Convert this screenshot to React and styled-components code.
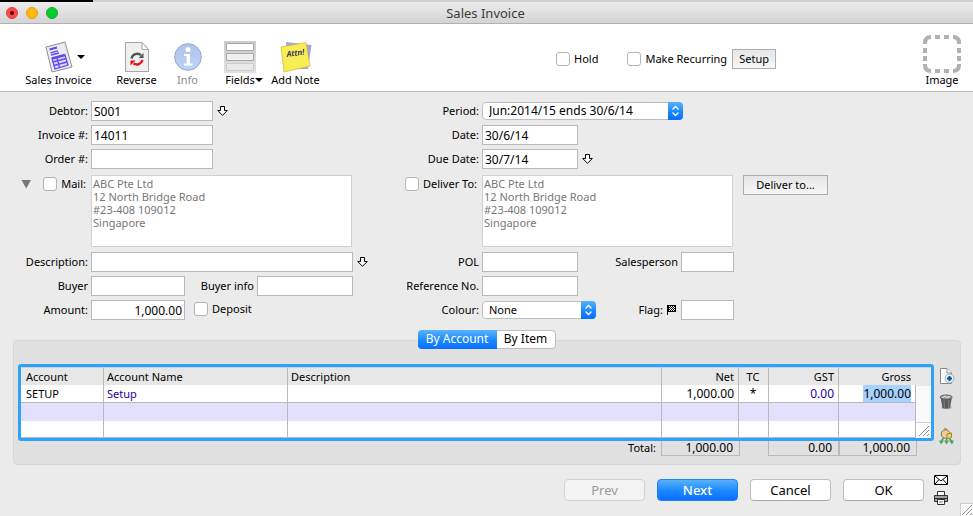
import React, { useState } from 'react';
import styled, { createGlobalStyle, css } from 'styled-components';

const colors = {
  window: '#ebebeb',
  panel: '#e1e1e1',
  line: '#b9b9b9',
  focus: '#2ea2f8',
  muted: '#777777',
  link: '#1c00a8',
};

const blueFill = 'linear-gradient(#58b2fb, #1a88ff 55%, #0a6dff)';

const GlobalStyle = createGlobalStyle`
  * {
    box-sizing: border-box;
  }

  body {
    margin: 0;
    background: ${colors.window};
  }

  body, button, input, select, textarea {
    font-family: 'Noto Sans', 'Open Sans', sans-serif;
    font-size: 11px;
    line-height: 14px;
    color: #000;
  }

  svg {
    display: block;
    flex: none;
  }
`;

const Window = styled.div`
  position: relative;
  display: flex;
  flex-direction: column;
  min-height: 100vh;
`;

const Backdrop = styled.div`
  height: 2px;
  background: linear-gradient(to right, #000 93px, #cfcfcf 93px);
`;

const TitleBar = styled.header`
  display: grid;
  grid-template-columns: 1fr auto 1fr;
  align-items: center;
  height: 22px;
  padding: 0 8px 0 6px;
  background: linear-gradient(#ececec, #d4d4d4);
  border-bottom: 1px solid #b1b1b1;
  border-radius: 4px 4px 0 0;

  h1 {
    margin: 0;
    font-size: 13px;
    line-height: 18px;
    font-weight: 400;
    color: #3c3c3c;
  }
`;

const Lights = styled.div`
  display: flex;
  gap: 8px;
`;

const Light = styled.button`
  display: grid;
  place-items: center;
  width: 12px;
  height: 12px;
  padding: 0;
  border: 1px solid ${(p) => p.$edge};
  border-radius: 50%;
  background: ${(p) => p.$fill};

  i {
    width: 4px;
    height: 4px;
    border-radius: 50%;
    background: #4d0000;
  }
`;

const Toolbar = styled.div`
  display: flex;
  height: 68px;
  padding: 0 11px 0 10px;
  background: #fff;
  border-bottom: 1px solid #bcbcbc;
`;

const Tool = styled.button`
  display: flex;
  flex-direction: column;
  align-items: center;
  justify-content: flex-end;
  width: ${(p) => p.$width}px;
  padding: 0 0 4px;
  border: 0;
  background: none;
  white-space: nowrap;

  &:disabled {
    color: #8c8c8c;
  }
`;

const Anchor = styled.span`
  position: relative;
  display: block;
`;

const Caret = styled.span`
  position: absolute;
  left: 100%;
  top: 50%;
  margin: -2px 0 0 ${(p) => p.$gap || 0}px;
  border: 4px solid transparent;
  border-top-color: #000;
  border-bottom: 0;
`;

const Options = styled.div`
  display: flex;
  flex: 1;
  align-items: center;
  margin-left: 236px;
  padding-top: 2px;
  white-space: nowrap;
`;

const CheckLabel = styled.label`
  display: inline-flex;
  align-items: center;
  gap: 4px;
  margin-right: ${(p) => p.$after || 0}px;
`;

const Checkbox = styled.input.attrs({ type: 'checkbox' })`
  appearance: none;
  flex: none;
  width: 14px;
  height: 14px;
  margin: 0;
  border: 1px solid #b4b4b4;
  border-radius: 3px;
  background: #fff;

  &:checked {
    background: ${blueFill};
  }
`;

const FlatButton = styled.button`
  width: ${(p) => p.$width}px;
  height: 20px;
  padding: 0;
  border: 1px solid #adadad;
  background: linear-gradient(#e6e6e6, #f6f6f6);
  white-space: nowrap;
`;

const Form = styled.form`
  display: grid;
  grid-template-columns: minmax(390px, 2fr) 3fr;
  padding: 9px 0 20px;
`;

const Column = styled.div`
  display: flex;
  flex-direction: column;
  gap: 4px;
`;

const Row = styled.div`
  display: grid;
  grid-template-columns: ${(p) => (p.$right ? 89 : 88)}px 1fr;
  column-gap: 3px;
  align-items: center;
  height: 20px;

  ${(p) =>
    p.$address &&
    css`
      align-items: start;
      height: auto;
      margin: 2px 0 1px;
    `}
`;

const Label = styled.label`
  width: ${(p) => (p.$width ? `${p.$width}px` : 'auto')};
  padding-right: ${(p) => (p.$width ? 3 : 0)}px;
  text-align: right;
  white-space: nowrap;
`;

const Fields = styled.div`
  display: flex;
  align-items: center;
`;

const field = css`
  border: 1px solid ${colors.line};
  border-radius: 0;
  background: #fff;
  outline: none;
`;

const TextInput = styled.input`
  ${field}
  width: ${(p) => p.$width}px;
  height: 20px;
  padding: 0 2px;
  font-size: 12px;
  text-align: ${(p) => (p.$number ? 'right' : 'left')};
`;

const Address = styled.textarea`
  ${field}
  display: block;
  width: ${(p) => p.$width}px;
  height: 72px;
  padding: 1px;
  border-color: #d0d0d0;
  line-height: 13px;
  color: ${colors.muted};
  resize: none;
`;

const AddressLabel = styled.div`
  display: flex;
  align-items: center;
  justify-content: flex-end;
  height: 18px;
  padding-right: 2px;
`;

const Disclosure = styled.button`
  width: 10px;
  height: 9px;
  margin-right: 12px;
  padding: 0;
  border: 0;
  background: ${colors.muted};
  clip-path: polygon(0 0, 100% 0, 50% 100%);
`;

const ArrowButton = styled.button`
  margin-left: 4px;
  padding: 0;
  border: 0;
  background: none;
`;

const SelectBox = styled.div`
  display: grid;
  width: ${(p) => p.$width}px;
  height: 18px;
  border-radius: 4px;
  overflow: hidden;

  > * {
    grid-area: 1 / 1;
  }

  select {
    appearance: none;
    width: 100%;
    height: 18px;
    padding: 0 20px 0 6px;
    border: 1px solid #bdbdbd;
    border-radius: 4px;
    background: #fff;
    font-size: ${(p) => (p.$large ? 12 : 11)}px;
  }
`;

const Stepper = styled.span`
  display: grid;
  place-items: center;
  justify-self: end;
  width: 15px;
  background: ${blueFill};
  pointer-events: none;
`;

const FlagSlot = styled.span`
  display: flex;
  align-items: center;
  justify-content: flex-end;
  gap: 4px;
  width: 85px;
  padding-right: 5px;
`;

const DepositSlot = styled.span`
  padding-left: 9px;
`;

const DeliverSlot = styled.div`
  align-self: flex-start;
  padding-left: 10px;
`;

const Panel = styled.section`
  margin: 0 12px 0 13px;
  padding: 0 5px 8px 4px;
  background: ${colors.panel};
  border: 1px solid #d6d6d6;
  border-radius: 4px;
`;

const Tabs = styled.div`
  display: flex;
  width: max-content;
  height: 19px;
  margin: -11px auto 15px;
  border: 1px solid #bdbdbd;
  border-radius: 4px;
  background: #fff;
`;

const Tab = styled.button`
  width: ${(p) => p.$width}px;
  padding: 0 0 1px;
  border: 0;
  background: none;
  font-size: 12px;

  &[aria-selected='true'] {
    margin: -1px 0 -1px -1px;
    border-radius: 4px 0 0 4px;
    background: ${blueFill};
    color: #fff;
  }
`;

const Ledger = styled.div`
  display: flex;
  gap: 5px;
`;

const LedgerMain = styled.div`
  flex: 1;
`;

const Frame = styled.div`
  display: flex;
  border: 3px solid ${colors.focus};
  border-radius: 3px;
  background: #fff;
`;

const Table = styled.table`
  flex: 1;
  width: 100%;
  table-layout: fixed;
  border-collapse: separate;
  border-spacing: 0;

  th, td {
    height: 18px;
    padding: 0 4px 0 3px;
    border-right: 1px solid ${colors.line};
    font-weight: 400;
    line-height: 16px;
    text-align: left;
    white-space: nowrap;
  }

  th:nth-child(n + 4), td:nth-child(n + 4) {
    text-align: right;
  }

  th:nth-child(5), td:nth-child(5) {
    text-align: center;
  }

  th:first-child, td:first-child {
    padding-left: 5px;
  }

  th:last-child {
    border-right: 0;
    padding-right: 5px;
  }

  th {
    background: #e7e7e7;
    border-top: 1px solid #cfcfcf;
  }

  td:nth-child(n + 4) {
    font-size: 12px;
  }

  tbody tr:first-child td {
    border-bottom: 1px solid ${colors.line};
  }

  tbody tr:nth-child(2) td {
    background: #e3e0fd;
  }

  tbody tr:last-child td {
    height: 17px;
    border-bottom: 1px solid ${colors.line};
  }

  mark {
    background: #a6d2ff;
    color: inherit;
  }
`;

const Computed = styled.span`
  color: ${colors.link};
`;

const ScrollTrack = styled.div`
  display: flex;
  flex-direction: column;
  width: 15px;
  background: #f9f9f9;

  &::before {
    content: '';
    height: 18px;
    background: #e7e7e7;
    border-top: 1px solid #cfcfcf;
  }
`;

const Grip = styled.div`
  display: grid;
  place-items: center;
  width: 15px;
  height: 16px;
  margin-top: auto;
  background: #fff;
  border-top: 1px solid #d0d0d0;
`;

const Totals = styled.div`
  display: grid;
  grid-template-columns: 1fr 79px 28px 71px 78px;
  margin-right: 17px;

  > span {
    padding-right: 5px;
    text-align: right;
  }

  output {
    height: 15px;
    padding-right: 6px;
    border: 1px solid ${colors.line};
    border-top: 0;
    font-size: 12px;
    text-align: right;
  }

  output:nth-of-type(2) {
    grid-column: 4;
  }
`;

const SideTools = styled.div`
  display: flex;
  flex-direction: column;
  gap: 10px;
  width: 16px;
  padding-top: 4px;
`;

const IconButton = styled.button`
  display: block;
  margin-top: ${(p) => p.$apart || 0}px;
  padding: 0;
  border: 0;
  background: none;
`;

const Footer = styled.footer`
  display: flex;
  align-items: center;
  justify-content: flex-end;
  gap: 10px;
  padding: 10px 25px 10px 0;
`;

const Buttons = styled.div`
  display: flex;
  gap: 12px;
`;

const PushButton = styled.button`
  width: 81px;
  height: 22px;
  padding: 0;
  border: 1px solid #bfbfbf;
  border-bottom-color: #a9a9a9;
  border-radius: 4px;
  background: #fff;
  font-size: 13px;

  ${(p) =>
    p.$primary &&
    css`
      border-color: #1a83f5;
      background: ${blueFill};
      color: #fff;
      font-weight: 500;
    `}

  &:disabled {
    border-color: #d2d2d2;
    background: #f3f3f3;
    color: #9b9b9b;
  }
`;

const SendTools = styled.div`
  display: flex;
  flex-direction: column;
  gap: 6px;
`;

const WindowGrip = styled.div`
  position: absolute;
  right: 0;
  bottom: 0;
  display: grid;
  place-items: end;
  width: 13px;
  height: 13px;
  background: #fff;
  border: solid #d0d0d0;
  border-width: 1px 0 0 1px;
`;

const InvoiceIcon = () => (
  <svg width='28' height='32' viewBox='0 0 28 32'>
    <path d='M1 6 L20 1 L27 26 L7 31 Z' fill='#ececf0' stroke='#8e8e8e' />
    <g stroke='#5f4cf0' strokeWidth='1.300' fill='none'>
      <path d='M4.500 8.500 L12 6.500' strokeWidth='2' />
      <path d='M5.500 11.800 L13 9.800 M6 14 L14 12' />
      <path d='M7 17.500 L20 14 L23 24 L10 28 Z' fill='#dcd8fb' />
      <path d='M7 17.500 L20 14' strokeWidth='2.400' />
      <path d='M8 21 L21 17.500 M9 24.500 L22 21 M12 17 L14.500 26.500' />
    </g>
  </svg>
);

const ReverseIcon = () => (
  <svg width='24' height='32' viewBox='0 0 24 32'>
    <path d='M.5 1.500 H17 L23.500 8.500 V30.500 H.5 Z' fill='#f0f0f0' stroke='#a6a6a6' />
    <path d='M17 1.500 V8.500 H23.500 Z' fill='#fff' stroke='#a6a6a6' />
    <path d='M6.500 17.500 A6 6 0 0 1 16 14' fill='none' stroke='#555' strokeWidth='2.400' />
    <path d='M18.500 12 V17 H13.500 Z' fill='#555' />
    <path d='M17.500 19 A6 6 0 0 1 8.500 22.500' fill='none' stroke='#e51414' strokeWidth='2.400' />
    <path d='M5.500 24.500 V19.500 H10.500 Z' fill='#e51414' />
  </svg>
);

const InfoIcon = () => (
  <svg width='28' height='32' viewBox='0 0 28 32'>
    <defs>
      <linearGradient id='infoFill' x2='0' y2='1'>
        <stop offset='0' stopColor='#b0c3e9' />
        <stop offset='1' stopColor='#bed3fa' />
      </linearGradient>
    </defs>
    <circle cx='14' cy='16' r='13.300' fill='url(#infoFill)' stroke='#93a9cf' />
    <circle cx='14' cy='8.500' r='2.500' fill='#fff' />
    <path d='M10 13 H16 V22.500 H18.500 V24.500 H10 V22.500 H12.500 V15 H10 Z' fill='#fff' />
  </svg>
);

const FieldsIcon = () => (
  <svg width='32' height='32' viewBox='0 0 32 32'>
    <defs>
      <linearGradient id='fieldsFill' x2='0' y2='1'>
        <stop offset='0' stopColor='#cccccc' />
        <stop offset='1' stopColor='#e2e2e2' />
      </linearGradient>
    </defs>
    <path d='M0 0 H32 V32 H0 Z' fill='url(#fieldsFill)' />
    <g stroke='#a8a8a8'>
      <path d='M2.500 2.500 H29.500 V9.500 H2.500 Z' fill='#fff' />
      <path d='M2.500 12.500 H29.500 V19.500 H2.500 Z' fill='#f0f0f0' />
      <path d='M2.500 22.500 H29.500 V29.500 H2.500 Z' fill='#e9e9e9' stroke='#cdcdcd' />
    </g>
  </svg>
);

const NoteIcon = () => (
  <svg width='32' height='32' viewBox='0 0 32 32'>
    <path d='M6 1 L31.500 4 L28 28 L8 28 Z' fill='#a9a2de' />
    <path d='M1 6 L26 1.500 L30 25 L4 31 Z' fill='#f7ee55' stroke='#c9b93e' strokeWidth='.7' />
    <text
      x='7'
      y='16'
      fontFamily='Noto Sans, sans-serif'
      fontSize='8'
      fontStyle='italic'
      fontWeight='600'
      fill='#29245c'
      transform='rotate(-8 7 16)'
    >
      Attn!
    </text>
  </svg>
);

const ImageIcon = () => (
  <svg width='38' height='38' viewBox='0 0 38 38' fill='none' stroke='#b1b1b1' strokeWidth='4'>
    <path d='M2 9 V8 Q2 2 8 2 M30 2 Q36 2 36 8 V9 M36 29 V30 Q36 36 30 36 M8 36 Q2 36 2 30 V29' />
    <path d='M12 2 H17 M21 2 H26 M12 36 H17 M21 36 H26 M2 13 V18 M2 21 V26 M36 13 V18 M36 21 V26' />
  </svg>
);

const DownArrow = () => (
  <svg width='11' height='10' viewBox='0 0 11 10'>
    <path d='M3.500 .5 H7.500 V4.500 H10.300 L5.500 9.300 L.7 4.500 H3.500 Z' fill='#fff' stroke='#000' />
  </svg>
);

const Chevrons = () => (
  <svg width='9' height='12' viewBox='0 0 9 12' fill='none' stroke='#fff' strokeWidth='1.300'>
    <path d='M1.500 4.500 L4.500 1.500 L7.500 4.500 M1.500 7.500 L4.500 10.500 L7.500 7.500' />
  </svg>
);

const FlagIcon = () => (
  <svg width='9' height='10' viewBox='0 0 9 10' shapeRendering='crispEdges'>
    <path d='M0 0 H9 V7 H1 V10 H0 Z' />
    <path
      d='M2 1 h1 v1 h-1z M4 1 h1 v1 h-1z M6 1 h1 v1 h-1z M3 2 h1 v1 h-1z M5 2 h1 v1 h-1z M7 2 h1 v1 h-1z M2 3 h1 v1 h-1z M4 3 h1 v1 h-1z M6 3 h1 v1 h-1z M3 4 h1 v1 h-1z M5 4 h1 v1 h-1z M7 4 h1 v1 h-1z M2 5 h1 v1 h-1z M4 5 h1 v1 h-1z M6 5 h1 v1 h-1z'
      fill='#fff'
    />
  </svg>
);

const AddPageIcon = () => (
  <svg width='16' height='16' viewBox='0 0 16 16'>
    <path d='M1.500 .5 H8 L12.500 5 V15.500 H1.500 Z' fill='#fafafa' stroke='#8a8a8a' />
    <path d='M8 .5 V5 H12.500' fill='#fff' stroke='#8a8a8a' />
    <circle cx='10.500' cy='10.500' r='4.500' fill='#e3edf6' stroke='#8fa3b8' strokeWidth='.8' />
    <path d='M10.500 8 V13 M8 10.500 H13' stroke='#0c4b8c' strokeWidth='2' />
  </svg>
);

const TrashIcon = () => (
  <svg width='16' height='16' viewBox='0 0 16 16'>
    <ellipse cx='7.500' cy='13.500' rx='6' ry='1.800' fill='#bdbdbd' />
    <path d='M1.500 3 L3.500 14 Q7.500 15.500 11 14 L13 3 Z' fill='#5c5c5c' />
    <path d='M5 6 L5.500 14 M10 6 L9.500 14' stroke='#7d7d7d' />
    <ellipse cx='7.200' cy='3.200' rx='6' ry='2.200' fill='#9c9c9c' stroke='#5f5f5f' />
    <path d='M3.500 3.500 L6 2 L8 3.500 L11 2.500' fill='none' stroke='#efefef' />
  </svg>
);

const SplitIcon = () => (
  <svg width='16' height='17' viewBox='0 0 16 17'>
    <circle cx='6.500' cy='6' r='4.300' fill='#e6cf9c' stroke='#91703a' />
    <path d='M5 1.500 L6.500 .5 L8 1.500' stroke='#91703a' fill='none' />
    <path d='M8 6 L12.500 5 V9.500 L8 11 Z' fill='#edd457' stroke='#a1872a' />
    <path d='M4.500 10 L2.500 13 M7.500 10.500 V13 M10.500 10.500 L12.500 13' stroke='#4b9c58' strokeWidth='1.500' />
    <path d='M0 12.500 H5 L2 16.500 Z M5 12.500 H10 L7.500 16.500 Z M10 12.500 H15 L13 16.500 Z' fill='#4da45c' />
  </svg>
);

const MailIcon = () => (
  <svg width='14' height='10' viewBox='0 0 14 10'>
    <path d='M.5 .5 H13.500 V9.500 H.5 Z' fill='#fff' stroke='#000' />
    <path d='M1 1 L7 6 L13 1 M1 9 L5 4.500 M13 9 L9 4.500' fill='none' stroke='#000' />
  </svg>
);

const PrinterIcon = () => (
  <svg width='14' height='14' viewBox='0 0 14 14'>
    <path d='M3.500 5 V.5 H10.500 V5' fill='#fff' stroke='#333' />
    <path d='M.5 4.500 H13.500 V10.500 H.5 Z' fill='#a2a2a2' stroke='#333' />
    <path d='M1 7.500 H13' stroke='#333' />
    <path d='M3.500 8.500 H10.500 V13.500 H3.500 Z' fill='#fff' stroke='#333' />
    <path d='M5 11 H9' stroke='#777' />
  </svg>
);

const GripLines = () => (
  <svg width='12' height='12' viewBox='0 0 12 12' stroke='#8b8b8b'>
    <path d='M1 11 L11 1 M5 11 L11 5 M9 11 L11 9' />
  </svg>
);

const address = 'ABC Pte Ltd\n12 North Bridge Road\n#23-408 109012\nSingapore';

const Input = ({ id, width, value = '', number }) => (
  <TextInput id={id} $width={width} $number={number} defaultValue={value} />
);

const Select = ({ id, width, large, children }) => (
  <SelectBox $width={width} $large={large}>
    <select id={id}>
      <option>{children}</option>
    </select>
    <Stepper>
      <Chevrons />
    </Stepper>
  </SelectBox>
);

const Lookup = ({ label }) => (
  <ArrowButton type='button' aria-label={label}>
    <DownArrow />
  </ArrowButton>
);

const InvoiceToolbar = () => (
  <Toolbar>
    <Tool $width={97}>
      <Anchor>
        <InvoiceIcon />
        <Caret $gap={4} />
      </Anchor>
      Sales Invoice
    </Tool>
    <Tool $width={59}>
      <ReverseIcon />
      Reverse
    </Tool>
    <Tool $width={43} disabled>
      <InfoIcon />
      Info
    </Tool>
    <Tool $width={62}>
      <FieldsIcon />
      <Anchor>
        Fields
        <Caret />
      </Anchor>
    </Tool>
    <Tool $width={49}>
      <NoteIcon />
      Add Note
    </Tool>
    <Options>
      <CheckLabel $after={29}>
        <Checkbox />
        Hold
      </CheckLabel>
      <CheckLabel $after={5}>
        <Checkbox />
        Make Recurring
      </CheckLabel>
      <FlatButton $width={44}>Setup</FlatButton>
    </Options>
    <Tool $width={40}>
      <ImageIcon />
      Image
    </Tool>
  </Toolbar>
);

const InvoiceForm = () => (
  <Form>
    <Column>
      <Row>
        <Label htmlFor='debtor'>Debtor:</Label>
        <Fields>
          <Input id='debtor' width={122} value='S001' />
          <Lookup label='Find debtor' />
        </Fields>
      </Row>
      <Row>
        <Label htmlFor='invoice'>Invoice #:</Label>
        <Input id='invoice' width={122} value='14011' />
      </Row>
      <Row>
        <Label htmlFor='order'>Order #:</Label>
        <Input id='order' width={122} />
      </Row>
      <Row $address>
        <AddressLabel>
          <Disclosure type='button' aria-label='Hide addresses' />
          <CheckLabel>
            <Checkbox />
            Mail:
          </CheckLabel>
        </AddressLabel>
        <Address $width={261} aria-label='Mail address' defaultValue={address} />
      </Row>
      <Row>
        <Label htmlFor='description'>Description:</Label>
        <Fields>
          <Input id='description' width={262} />
          <Lookup label='Find description' />
        </Fields>
      </Row>
      <Row>
        <Label htmlFor='buyer'>Buyer</Label>
        <Fields>
          <Input id='buyer' width={94} />
          <Label htmlFor='buyerInfo' $width={72}>
            Buyer info
          </Label>
          <Input id='buyerInfo' width={96} />
        </Fields>
      </Row>
      <Row>
        <Label htmlFor='amount'>Amount:</Label>
        <Fields>
          <Input id='amount' width={94} value='1,000.00' number />
          <DepositSlot>
            <CheckLabel>
              <Checkbox />
              Deposit
            </CheckLabel>
          </DepositSlot>
        </Fields>
      </Row>
    </Column>

    <Column>
      <Row $right>
        <Label htmlFor='period'>Period:</Label>
        <Select id='period' width={201} large>
          Jun:2014/15 ends 30/6/14
        </Select>
      </Row>
      <Row $right>
        <Label htmlFor='date'>Date:</Label>
        <Input id='date' width={96} value='30/6/14' />
      </Row>
      <Row $right>
        <Label htmlFor='dueDate'>Due Date:</Label>
        <Fields>
          <Input id='dueDate' width={96} value='30/7/14' />
          <Lookup label='Pick due date' />
        </Fields>
      </Row>
      <Row $right $address>
        <AddressLabel>
          <CheckLabel>
            <Checkbox />
            Deliver To:
          </CheckLabel>
        </AddressLabel>
        <Fields>
          <Address $width={251} aria-label='Delivery address' defaultValue={address} />
          <DeliverSlot>
            <FlatButton type='button' $width={85}>
              Deliver to...
            </FlatButton>
          </DeliverSlot>
        </Fields>
      </Row>
      <Row $right>
        <Label htmlFor='pol'>POL</Label>
        <Fields>
          <Input id='pol' width={96} />
          <Label htmlFor='salesperson' $width={103}>
            Salesperson
          </Label>
          <Input id='salesperson' width={53} />
        </Fields>
      </Row>
      <Row $right>
        <Label htmlFor='reference'>Reference No.</Label>
        <Input id='reference' width={96} />
      </Row>
      <Row $right>
        <Label htmlFor='colour'>Colour:</Label>
        <Fields>
          <Select id='colour' width={114}>
            None
          </Select>
          <FlagSlot>
            <Label htmlFor='flag'>Flag:</Label>
            <FlagIcon />
          </FlagSlot>
          <Input id='flag' width={53} />
        </Fields>
      </Row>
    </Column>
  </Form>
);

const LedgerTable = () => (
  <Table>
    <colgroup>
      <col width='83' />
      <col width='184' />
      <col />
      <col width='77' />
      <col width='30' />
      <col width='70' />
      <col width='77' />
    </colgroup>
    <thead>
      <tr>
        <th>Account</th>
        <th>Account Name</th>
        <th>Description</th>
        <th>Net</th>
        <th>TC</th>
        <th>GST</th>
        <th>Gross</th>
      </tr>
    </thead>
    <tbody>
      <tr>
        <td>SETUP</td>
        <td>
          <Computed>Setup</Computed>
        </td>
        <td />
        <td>1,000.00</td>
        <td>*</td>
        <td>
          <Computed>0.00</Computed>
        </td>
        <td>
          <mark>1,000.00</mark>
        </td>
      </tr>
      {[1, 2].map((row) => (
        <tr key={row}>
          <td />
          <td />
          <td />
          <td />
          <td />
          <td />
          <td />
        </tr>
      ))}
    </tbody>
  </Table>
);

const App = () => {
  const [tab, setTab] = useState('account');

  return (
    <Window>
      <GlobalStyle />
      <Backdrop />
      <TitleBar>
        <Lights>
          <Light $fill='#fc4a48' $edge='#e03b38' aria-label='Close'>
            <i />
          </Light>
          <Light $fill='#fdb90c' $edge='#e5a10b' aria-label='Minimise' />
          <Light $fill='#05cc2e' $edge='#12ac28' aria-label='Zoom' />
        </Lights>
        <h1>Sales Invoice</h1>
      </TitleBar>

      <InvoiceToolbar />
      <InvoiceForm />

      <Panel>
        <Tabs role='tablist'>
          <Tab role='tab' $width={79} aria-selected={tab === 'account'} onClick={() => setTab('account')}>
            By Account
          </Tab>
          <Tab role='tab' $width={58} aria-selected={tab === 'item'} onClick={() => setTab('item')}>
            By Item
          </Tab>
        </Tabs>
        <Ledger>
          <LedgerMain>
            <Frame>
              <LedgerTable />
              <ScrollTrack>
                <Grip>
                  <GripLines />
                </Grip>
              </ScrollTrack>
            </Frame>
            <Totals>
              <span>Total:</span>
              <output>1,000.00</output>
              <output>0.00</output>
              <output>1,000.00</output>
            </Totals>
          </LedgerMain>
          <SideTools>
            <IconButton aria-label='Add line'>
              <AddPageIcon />
            </IconButton>
            <IconButton aria-label='Delete line'>
              <TrashIcon />
            </IconButton>
            <IconButton aria-label='Allocate to jobs' $apart={8}>
              <SplitIcon />
            </IconButton>
          </SideTools>
        </Ledger>
      </Panel>

      <Footer>
        <Buttons>
          <PushButton disabled>Prev</PushButton>
          <PushButton $primary>Next</PushButton>
          <PushButton>Cancel</PushButton>
          <PushButton>OK</PushButton>
        </Buttons>
        <SendTools>
          <IconButton aria-label='Email'>
            <MailIcon />
          </IconButton>
          <IconButton aria-label='Print'>
            <PrinterIcon />
          </IconButton>
        </SendTools>
      </Footer>
      <WindowGrip>
        <GripLines />
      </WindowGrip>
    </Window>
  );
};

export default App;
